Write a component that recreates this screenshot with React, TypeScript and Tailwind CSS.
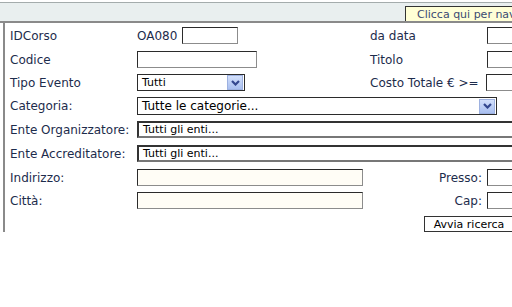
import React from "react";

function SelectArrow() {
  return (
    <span className="flex h-[15px] w-[16px] items-center justify-center border border-[#9db1e0] bg-gradient-to-b from-[#d3e0fb] to-[#a9bff0]">
      <svg width="9" height="6" viewBox="0 0 9 6">
        <path d="M1 1 L4.5 4.5 L8 1" fill="none" stroke="#33478f" strokeWidth="2.2" />
      </svg>
    </span>
  );
}

function TextBox({ className = "" }: { className?: string }) {
  return (
    <div
      className={[
        "h-[17px] shrink-0 border border-[#2b2b2b] border-r-[#8c8c8c] border-b-[#8c8c8c]",
        className,
      ].join(" ")}
    />
  );
}

function Label({ children, className = "" }: { children: React.ReactNode; className?: string }) {
  return <span className={["shrink-0 text-[#1d2c4c]", className].join(" ")}>{children}</span>;
}

export default function App() {
  return (
    <div
      className="h-[307px] w-[512px] overflow-hidden bg-white text-[12px] leading-none"
      style={{ fontFamily: '"DejaVu Sans", Verdana, sans-serif' }}
    >
      <div className="w-[580px] pt-[2px]">
        <div className="flex h-[21px] items-end border-t border-[#a4acac] border-b-2 border-b-[#8a8a8a] bg-[#e9efef] pl-[405px]">
          <div className="flex h-[15px] w-[175px] items-center border-t border-l border-[#333] bg-[#ffffd6] pl-[11px] text-[11px] text-[#3b4a72]">
            Clicca qui per navigare
          </div>
        </div>

        <div className="ml-[3px] h-[209px] border-l-2 border-[#8a8a8a] pl-[5px]">
          <div className="flex flex-col">
            <div className="mt-[4px] flex h-[17px] items-center">
              <Label className="w-[127px]">IDCorso</Label>
              <span className="w-[45px] text-[#1d2c4c]">OA080</span>
              <TextBox className="w-[56px] bg-white" />
              <span className="w-[132px]" />
              <Label className="w-[117px]">da data</Label>
              <TextBox className="w-[60px] bg-white" />
            </div>

            <div className="mt-[7px] flex h-[17px] items-center">
              <Label className="w-[127px]">Codice</Label>
              <TextBox className="w-[120px] bg-white" />
              <span className="w-[113px]" />
              <Label className="w-[117px]">Titolo</Label>
              <TextBox className="w-[60px] bg-white" />
            </div>

            <div className="mt-[6px] flex h-[17px] items-center">
              <Label className="w-[127px]">Tipo Evento</Label>
              <div className="flex h-[17px] w-[108px] shrink-0 items-center justify-between border border-[#2b2b2b] bg-white pl-[4px] pr-px text-[11px] text-black">
                Tutti
                <SelectArrow />
              </div>
              <span className="w-[125px]" />
              <Label className="w-[116px]">Costo Totale € &gt;=</Label>
              <TextBox className="w-[60px] bg-white" />
            </div>

            <div className="mt-[6px] flex h-[18px] items-center">
              <Label className="w-[127px]">Categoria:</Label>
              <div className="flex h-[18px] w-[360px] shrink-0 items-center justify-between border border-[#2b2b2b] bg-white pl-[4px] pr-px text-black">
                Tutte le categorie...
                <SelectArrow />
              </div>
            </div>

            <div className="mt-[6px] flex h-[17px] items-center">
              <Label className="w-[127px]">Ente Organizzatore:</Label>
              <div className="flex h-[17px] w-[430px] shrink-0 items-center border-t-2 border-l-2 border-[#333] border-b-2 border-b-[#777] bg-white pl-[4px] text-[11px] text-black">
                Tutti gli enti...
              </div>
            </div>

            <div className="mt-[7px] flex h-[17px] items-center">
              <Label className="w-[127px]">Ente Accreditatore:</Label>
              <div className="flex h-[17px] w-[430px] shrink-0 items-center border-t-2 border-l-2 border-[#333] border-b-2 border-b-[#777] bg-white pl-[4px] text-[11px] text-black">
                Tutti gli enti...
              </div>
            </div>

            <div className="mt-[7px] flex h-[17px] items-center">
              <Label className="w-[127px]">Indirizzo:</Label>
              <TextBox className="w-[226px] bg-[#fffdf6]" />
              <Label className="w-[124px] pr-[5px] text-right">Presso:</Label>
              <TextBox className="w-[60px] bg-white" />
            </div>

            <div className="mt-[6px] flex h-[17px] items-center">
              <Label className="w-[127px]">Città:</Label>
              <TextBox className="w-[226px] bg-[#fffdf6]" />
              <Label className="w-[124px] pr-[5px] text-right">Cap:</Label>
              <TextBox className="w-[60px] bg-white" />
            </div>

            <div className="mt-[7px] flex h-[16px] items-center pl-[414px]">
              <div className="flex h-[16px] w-[90px] items-center justify-center border border-[#333] bg-white text-[11px] text-black">
                Avvia ricerca
              </div>
            </div>
          </div>
        </div>
      </div>
    </div>
  );
}
